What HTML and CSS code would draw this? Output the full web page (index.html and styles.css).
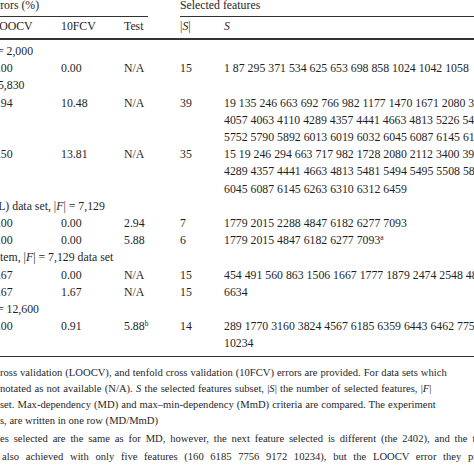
FILE: index.html
```html
<!DOCTYPE html>
<html>
<head>
<meta charset="utf-8">
<link rel="stylesheet" href="styles.css">
</head>
<body>
<div class="page">
  <div class="hdr1">
    <div class="grp-errors"><span class="shift-errors">Errors (%)</span></div>
    <div class="grp-selected">Selected features</div>
  </div>
  <div class="row hdr2">
    <div>LOOCV</div>
    <div>10FCV</div>
    <div>Test</div>
    <div>|<i>S</i>|</div>
    <div><i>S</i></div>
  </div>
  <div class="body">
    <div class="group"><span class="g1">|<i>F</i>| = 2,000</span></div>
    <div class="row">
      <div>0.00</div><div>0.00</div><div>N/A</div><div>15</div>
      <div class="s"><div>1 87 295 371 534 625 653 698 858 1024 1042 1058</div></div>
    </div>
    <div class="group"><span class="g2">15,830</span></div>
    <div class="row">
      <div>5.94</div><div>10.48</div><div>N/A</div><div>39</div>
      <div class="s">
        <div>19 135 246 663 692 766 982 1177 1470 1671 2080 3400</div>
        <div>4057 4063 4110 4289 4357 4441 4663 4813 5226 5481</div>
        <div>5752 5790 5892 6013 6019 6032 6045 6087 6145 6181</div>
      </div>
    </div>
    <div class="row">
      <div>8.50</div><div>13.81</div><div>N/A</div><div>35</div>
      <div class="s">
        <div>15 19 246 294 663 717 982 1728 2080 2112 3400 3972</div>
        <div>4289 4357 4441 4663 4813 5481 5494 5495 5508 5892</div>
        <div>6045 6087 6145 6263 6310 6312 6459</div>
      </div>
    </div>
    <div class="group"><span class="g3">(ALL/AML) data set, |<i>F</i>| = 7,129</span></div>
    <div class="row">
      <div>0.00</div><div>0.00</div><div>2.94</div><div>7</div>
      <div class="s"><div>1779 2015 2288 4847 6182 6277 7093</div></div>
    </div>
    <div class="row">
      <div>0.00</div><div>0.00</div><div>5.88</div><div>6</div>
      <div class="s"><div>1779 2015 4847 6182 6277 7093<sup>a</sup></div></div>
    </div>
    <div class="group"><span class="g4">tem, |<i>F</i>| = 7,129 data set</span></div>
    <div class="row">
      <div>1.67</div><div>0.00</div><div>N/A</div><div>15</div>
      <div class="s"><div>454 491 560 863 1506 1667 1777 1879 2474 2548 4847</div></div>
    </div>
    <div class="row">
      <div>1.67</div><div>1.67</div><div>N/A</div><div>15</div>
      <div class="s"><div>6634</div></div>
    </div>
    <div class="group"><span class="g5">|<i>F</i>| = 12,600</span></div>
    <div class="row">
      <div>0.00</div><div>0.91</div><div>5.88<sup>b</sup></div><div>14</div>
      <div class="s">
        <div>289 1770 3160 3824 4567 6185 6359 6443 6462 7756 9172</div>
        <div>10234</div>
      </div>
    </div>
  </div>
  <div class="notes">
    <div class="n1">ross validation (LOOCV), and tenfold cross validation (10FCV) errors are provided. For data sets which</div>
    <div class="n2">notated as not available (N/A). <i>S</i> the selected features subset, |<i>S</i>| the number of selected features, |<i>F</i>|</div>
    <div class="n3">set. Max-dependency (MD) and max–min-dependency (MmD) criteria are compared. The experiment</div>
    <div class="n4">s, are written in one row (MD/MmD)</div>
    <div class="n5">es selected are the same as for MD, however, the next feature selected is different (the 2402), and the t</div>
    <div class="n7">also achieved with only five features (160 6185 7756 9172 10234), but the LOOCV error they produ</div>
  </div>
</div>
</body>
</html>
```

FILE: styles.css
```css
html, body {
  margin: 0;
  padding: 0;
  background: #ffffff;
  overflow: hidden;
}
body {
  width: 474px;
  height: 474px;
  font-family: "Liberation Serif", "Times New Roman", serif;
  color: #1f1f1f;
}
.page {
  margin-left: -8px;
  width: 700px;
  font-size: 11.8px;
  white-space: nowrap;
}
.hdr1 {
  display: grid;
  grid-template-columns: 156px 32px 1fr;
  margin-top: -3px;
  line-height: 17px;
}
.grp-errors {
  grid-column: 1;
  padding-bottom: 1.5px;
  border-bottom: 1px solid #333;
}
.shift-errors {
  margin-left: -3px;
}
.grp-selected {
  grid-column: 3;
  padding-bottom: 1.5px;
  border-bottom: 1px solid #333;
}
.row {
  display: grid;
  grid-template-columns: 69px 63px 56px 44px 1fr;
  line-height: 17.2px;
}
.hdr2 {
  line-height: 17px;
  padding-top: 1.5px;
  padding-bottom: 2.5px;
  border-bottom: 2px solid #333;
}
.body {
  padding-top: 3.5px;
  padding-bottom: 3.5px;
  border-bottom: 1px solid #333;
}
.group {
  line-height: 17.2px;
}
.g1 { margin-left: -10px; }
.g2 { margin-left: 0px; }
.g3 { margin-left: -43px; }
.g4 { margin-left: 8px; }
.g5 { margin-left: -10px; }
sup {
  font-size: 7.5px;
  line-height: 0;
  vertical-align: 4px;
}
.notes {
  margin-top: 8px;
  font-size: 10.6px;
  line-height: 16px;
  margin-left: 8px;
}
.n1 { word-spacing: 0.3px; }
.n2 { word-spacing: 0.6px; }
.n3 { word-spacing: 0.4px; }
.n5 { margin-top: 2px; word-spacing: 2.2px; }
.n7 { margin-top: 2px; margin-left: 2px; word-spacing: 4px; }
```
